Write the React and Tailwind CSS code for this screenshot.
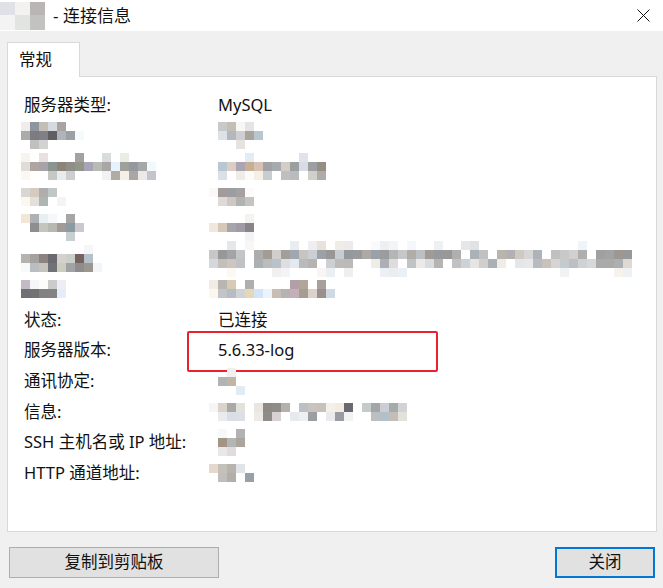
import React from "react";

const FONT = { fontFamily: '"Noto Sans", "Noto Sans CJK SC", sans-serif' };

// pseudo random mosaic for the long blurred value
function seeded(seed) {
  let s = seed;
  return () => {
    s = (s * 9301 + 49297) % 233280;
    return s / 233280;
  };
}

function genRows(seed, cols, spec) {
  const rnd = seeded(seed);
  return spec.map(([fill, lo, hi]) => {
    const row = [];
    for (let i = 0; i < cols; i++) {
      if (rnd() > fill) {
        row.push("");
        continue;
      }
      const v = Math.round(lo + rnd() * (hi - lo));
      const t = Math.round((rnd() - 0.5) * 14);
      const r = Math.min(255, v + t);
      const b = Math.min(255, v - t);
      row.push(`rgb(${r},${v},${b})`);
    }
    return row;
  });
}

const longValue = genRows(7, 47, [
  [0.25, 225, 250],
  [0.9, 150, 215],
  [0.85, 170, 240],
  [0.15, 235, 250],
]);

function Mosaic({ rows, cell = 9, h = 9, offset = 0 }) {
  return (
    <div className="flex flex-col" style={{ marginLeft: offset }}>
      {rows.map((r, i) => (
        <div key={i} className="flex">
          {r.map((c, j) => (
            <div key={j} style={{ width: cell, height: h, background: c ? "#" + c.replace("#", "") : "transparent" }} />
          ))}
        </div>
      ))}
    </div>
  );
}

function RawMosaic({ rows, offset = 0 }) {
  return (
    <div className="flex flex-col" style={{ marginLeft: offset }}>
      {rows.map((r, i) => (
        <div key={i} className="flex">
          {r.map((c, j) => (
            <div key={j} className="w-[9px] h-[9px]" style={{ background: c || "transparent" }} />
          ))}
        </div>
      ))}
    </div>
  );
}

const rows = [
  { label: "服务器类型:", value: "MySQL" },
  {
    labelM: [
      ["f0ecec", "8e959c", "c4bfb5", "d5d9e0", "a9a3a3"],
      ["a9aca8", "7e7b80", "7f7f85", "5f5f62", "aeb4bb", "9aa0a5", "f5fafd"],
      ["", "c0c0c0", "d2d2d2"],
    ],
    valueM: [
      ["c8c9cb", "c4beb4", "f7f7f5", "e4e4e4"],
      ["dde2e7", "b3b8bf", "d0cdd3", "aaa49f", "b8c6cf"],
      ["", "", "e6e3df"],
    ],
  },
  {
    labelM: [
      ["f7f3ef", "", "e9e0e0", "", "", "", "a6a19c", "", "", "d9dcdd", "", "e8ede5"],
      ["e0dcd7", "aea59e", "a8a3a8", "8b9490", "8c8477", "8f8f88", "929688", "a7a4b7", "b8bab4", "a8a7a6", "e7f2fd", "a0a09b", "9598a1", "a6a7a8", "f0fafd"],
      ["fbf7f3", "", "", "c5c8c3", "e9ecee", "cdcfcf", "", "", "", "f3f1f3", "b1aaa5", "f4f0e8", "aaa6a4", "ebe9ea", "c5c3cc"],
    ],
    valueM: [
      ["", "", "", "e2ecf6", "", "", "", "", "", "dfe4ea"],
      ["b9c7d0", "d9cdc6", "aaa5b0", "c7af92", "d7c0b4", "a2a1a5", "a7abaf", "d3cdc8", "9aa09f", "d8dce5", "9e9fa2", "958e83"],
      ["dae0e5", "", "efebe7", "fbfbfb", "f6efe6", "c9ccd0", "", "bfbfbf", "b9bcbf", "", "d0cfc8", "b0aaa8"],
    ],
  },
  {
    labelM: [
      ["d9d7d4", "d6cbc0", "afaeac", "c1c6c6"],
      ["fdf8ee", "e3e0dc", "aeb6b5", "", "f4f4f4"],
    ],
    valueOffset: -9,
    valueM: [
      ["fbf8f5", "a19b9c", "9a9da2", "a7a0a2", "fcfafa"],
      ["", "dfdad5", "cdc8c3", "b2b3af", "c7c2c3"],
    ],
  },
  {
    labelM: [
      ["f2e6d6", "adb1b3", "e8eff3", "f6f7f9", "", "a6a6a6"],
      ["", "8e8e8e", "c6c4be", "b8b8b2", "a19b98", "8c9aa1", "cdc8cf"],
      ["", "", "", "", "", "c8cfd1"],
    ],
    valueOffset: -9,
    valueM: [
      ["", "", "", "", "f4f3ef"],
      ["f0e8de", "d5c8b8", "a8a5a8", "9e9ca9", "8a8387"],
      ["", "", "", "", "f3f3f3"],
    ],
  },
  {
    labelM: [
      ["", "", "", "", "", "", "", "f6f6f6"],
      ["b5b3ae", "a5a19e", "8c8380", "6a6a70", "d3d2cc", "cacfca", "75625f", "b5c0cb"],
      ["f7fafa", "b9bec0", "c4c3bd", "6f7378", "cdccc1", "a0a2a5", "8f8d8c", "9c978e", "f3f6f8"],
    ],
    valueOffset: -9,
    raw: longValue,
  },
  {
    labelM: [
      ["c4bbc6", "f6f6f8", "fefcfa", "cbcbcb", "edeef3"],
      ["707074", "717273", "828282", "838383", "e5eef8"],
    ],
    valueOffset: -9,
    valueM: [
      ["f2ece4", "b9b5b0", "d7c9b4", "", "afafaf", "", "", "", "", "b2a0a8", "b1a697", "", "a7a09c"],
      ["fdf6ec", "c2c5c8", "b7bbc4", "d0d3d3", "e8d6b8", "d3e4f6", "ebf4fd", "c8bdb4", "b4b4b5", "c5b0ba", "a69c90", "dbd3cb", "9a8f8d", "cfd9e4"],
    ],
  },
  { label: "状态:", value: "已连接" },
  { label: "服务器版本:", value: "5.6.33-log", boxed: true },
  {
    label: "通讯协定:",
    valueM: [
      ["", "f0f0f0"],
      ["b0b4b2", "c1b5a8"],
      ["", "", "e1ebf1"],
    ],
  },
  {
    label: "信息:",
    valueOffset: -9,
    valueM: [
      ["f6f5f3", "d9d3cb", "aaa9a7", "e2e1dc", "", "e9e6e2", "8e8985", "908d89", "b4b1ad", "", "bcbfc4", "c9c3bd", "c6c2b9", "f4efe7", "f1ede5", "6b6970", "", "c4cbc8", "a3a5a7", "cbcfd4", "a6aaaa", "d1d3d5"],
      ["", "e9ecef", "d9dfe5", "dce0e6", "", "eeeae5", "8e8b88", "d7d1d3", "", "e6e9ed", "efeff1", "9b9fa3", "", "e9eaed", "999ca0", "f2f2f3", "", "", "bcbfbf", "b4c0c8", "c3bdb8", "e3e1dc"],
    ],
  },
  {
    label: "SSH 主机名或 IP 地址:",
    valueM: [
      ["f7f8f8", "", "b3b1b6"],
      ["a39585", "b4b6b6", "aba59b"],
      ["e9e8e8", "e1dcdc"],
    ],
  },
  {
    label: "HTTP 通道地址:",
    valueOffset: -9,
    valueM: [
      ["e4d9cc", "c6c0ba", "b9b3ad", "e0e4e6"],
      ["", "c2bebc", "b2aeab", "", "9aa1a6"],
    ],
  },
];

function InfoRow({ row }) {
  return (
    <div className="relative flex items-center h-[30.67px]">
      <div className="w-[194px] shrink-0 flex items-center">
        {row.label ? <span>{row.label}</span> : <Mosaic rows={row.labelM} offset={-3} />}
      </div>
      <div className="flex items-center">
        {row.value ? (
          <span>{row.value}</span>
        ) : row.raw ? (
          <RawMosaic rows={row.raw} offset={row.valueOffset || 0} />
        ) : (
          <Mosaic rows={row.valueM} offset={row.valueOffset || 0} />
        )}
      </div>
      {row.boxed && (
        <div className="absolute left-[163px] top-[-4px] w-[251px] h-[41px] border-[2.5px] border-[#e8232e] rounded-[2px]" />
      )}
    </div>
  );
}

export default function App() {
  return (
    <div className="w-[663px] h-[588px] bg-[#f0f0f0] flex flex-col text-[#111] overflow-hidden" style={FONT}>
      <div className="h-[31px] bg-white flex items-center">
        <div className="flex flex-col self-start mt-[2px]">
          <div className="flex">
            <div className="w-[15px] h-[13px] bg-[#dfe1e6]" />
            <div className="w-[15px] h-[13px] bg-[#f4f2ef]" />
            <div className="w-[15px] h-[13px] bg-[#b9b5b2]" />
          </div>
          <div className="flex">
            <div className="w-[15px] h-[15px] bg-[#f3f3f3]" />
            <div className="w-[15px] h-[15px] bg-[#e2e4e2]" />
            <div className="w-[15px] h-[15px] bg-[#c2c2c0]" />
          </div>
        </div>
        <span className="ml-[8px] text-[17px] leading-none">- 连接信息</span>
        <svg className="ml-auto mr-[13px]" width="13" height="13" viewBox="0 0 13 13">
          <path d="M0.5 0.5 L12.5 12.5 M12.5 0.5 L0.5 12.5" stroke="#111" strokeWidth="1" fill="none" />
        </svg>
      </div>

      <div className="px-[7px] pt-[11px] flex flex-col">
        <div className="relative z-10 -mb-px w-[73px] h-[35px] bg-white border border-b-0 border-[#d9d9d9] flex items-center pl-[11px] text-[16.5px]">
          常规
        </div>
        <div className="w-[650px] h-[456px] bg-white border border-[#d9d9d9] pl-[16px] pt-[13px] text-[16.5px] flex flex-col">
          {rows.map((r, i) => (
            <InfoRow key={i} row={r} />
          ))}
        </div>
        <div className="flex justify-between items-center mt-[15px] pl-[2px] pr-[1px]">
          <button className="w-[210px] h-[31px] bg-[#e1e1e1] border border-[#adadad] text-[16.5px] flex items-center justify-center">
            复制到剪贴板
          </button>
          <button className="w-[100px] h-[31px] bg-[#e1e1e1] border-2 border-[#0078d7] text-[16.5px] flex items-center justify-center">
            关闭
          </button>
        </div>
      </div>
    </div>
  );
}
